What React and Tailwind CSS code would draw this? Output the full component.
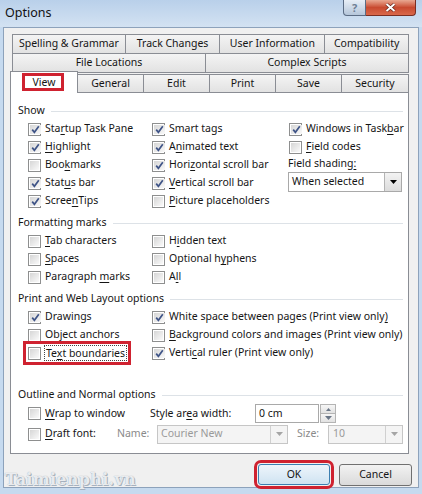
import React from 'react';

function Check({ checked }) {
  return (
    <span className="w-[13px] h-[13px] shrink-0 border border-[#8e8f8f] bg-white p-px flex">
      <span className="flex-1 bg-linear-to-br from-[#d6d6d6] to-[#fafafa] flex items-center justify-center">
        {checked && (
          <svg width="11" height="11" viewBox="0 0 11 11">
            <path d="M2.2 5.6 L4.4 8.3 L8.8 2.2" fill="none" stroke="#3f5487" strokeWidth="1.7" />
          </svg>
        )}
      </span>
    </span>
  );
}

function Opt({ checked, children, className = '' }) {
  return (
    <div className={`flex items-center gap-[4px] h-[18px] ${className}`}>
      <Check checked={checked} />
      <span className="whitespace-nowrap">{children}</span>
    </div>
  );
}

function Section({ title, className = '' }) {
  return (
    <div className={`flex items-center h-[18px] gap-[6px] pl-[7px] pr-[5px] ${className}`}>
      <span className="whitespace-nowrap">{title}</span>
      <div className="flex-1 h-px bg-[#dde2e7]" />
    </div>
  );
}

function Arrow({ color = '#000' }) {
  return (
    <svg width="7" height="4" viewBox="0 0 7 4">
      <path d="M0 0 H7 L3.5 4 Z" fill={color} />
    </svg>
  );
}

function Tab({ children, className = '' }) {
  return (
    <div
      className={`flex items-center justify-center border border-[#8a8d94] bg-linear-to-b from-[#f4f4f4] to-[#e2e2e2] -ml-px first:ml-0 whitespace-nowrap ${className}`}
    >
      {children}
    </div>
  );
}

const u = (s) => <u className="underline-offset-2">{s}</u>;

export default function App() {
  return (
    <div className="relative w-[422px] h-[494px] overflow-hidden bg-[#c6daef] text-[10.5px] text-[#151515] font-['Noto_Sans',sans-serif]">
      {/* title bar */}
      <div className="h-[27px] flex items-start justify-between bg-linear-to-b from-[#b9d0ea] to-[#d3e2f2] pl-[5px] pr-[6px]">
        <span className="text-[12.5px] pt-[4px] text-[#111]">Options</span>
        <div className="flex">
          <div className="w-[23px] h-[16px] flex items-center justify-center rounded-bl-[4px] border border-t-0 border-[#5b6c84] bg-linear-to-b from-[#e7eef6] to-[#b5c6da] text-[#6f7f95] text-[11px] leading-none font-bold">
            ?
          </div>
          <div className="w-[50px] h-[16px] flex items-center justify-center rounded-br-[4px] border border-t-0 border-l-0 border-[#7a2e22] bg-linear-to-b from-[#e8a892] via-[#c84a30] to-[#d9684a]">
            <svg width="11" height="9" viewBox="0 0 11 9">
              <path d="M1.5 1 L9.5 8 M9.5 1 L1.5 8" stroke="#5a1d14" strokeWidth="3.2" />
              <path d="M1.5 1 L9.5 8 M9.5 1 L1.5 8" stroke="#fff" strokeWidth="2" />
            </svg>
          </div>
        </div>
      </div>

      {/* dialog body */}
      <div className="ml-[3px] w-[416px] h-[461px] border border-[#8da2bb] bg-[#f0f0f0] flex flex-col pt-[6px]">
        {/* tabs */}
        <div className="flex ml-[8px] w-[397px] h-[20px]">
          <Tab className="w-[114px]">Spelling &amp; Grammar</Tab>
          <Tab className="w-[96px]">Track Changes</Tab>
          <Tab className="w-[106px]">User Information</Tab>
          <Tab className="w-[85px]">Compatibility</Tab>
        </div>
        <div className="flex ml-[8px] w-[397px] h-[20px] -mt-px">
          <Tab className="w-[194px]">File Locations</Tab>
          <Tab className="w-[204px]">Complex Scripts</Tab>
        </div>
        <div className="flex items-end ml-[6px] w-[399px] h-[19px]">
          <div className="relative z-10 w-[68px] h-[22px] -mb-px border border-b-0 border-[#8a8d94] bg-white flex items-center justify-center">
            View
            <span className="absolute left-[11px] top-[1px] w-[42px] h-[18px] border-[3px] border-[#cf2230]" />
          </div>
          {['General', 'Edit', 'Print', 'Save', 'Security'].map((t, i) => (
            <div
              key={t}
              className={`h-[18px] border border-b-0 border-l-0 border-[#8a8d94] bg-linear-to-b from-[#f4f4f4] to-[#e2e2e2] flex items-center justify-center ${i === 4 ? 'w-[67px]' : 'w-[66px]'}`}
            >
              {t}
            </div>
          ))}
        </div>

        {/* panel */}
        <div className="ml-[6px] w-[399px] h-[362px] border border-[#8a8d94] bg-white pt-[9px]">
          <Section title="Show" />
          <div className="grid grid-cols-[124px_137px_1fr] pl-[17px]">
            <div>
              <Opt checked>Sta{u('r')}tup Task Pane</Opt>
              <Opt checked>{u('H')}ighlight</Opt>
              <Opt>Boo{u('k')}marks</Opt>
              <Opt checked>Stat{u('u')}s bar</Opt>
              <Opt checked>Scree{u('n')}Tips</Opt>
            </div>
            <div>
              <Opt checked>Smart tags</Opt>
              <Opt checked>A{u('n')}imated text</Opt>
              <Opt checked>Hori{u('z')}ontal scroll bar</Opt>
              <Opt checked>{u('V')}ertical scroll bar</Opt>
              <Opt>{u('P')}icture placeholders</Opt>
            </div>
            <div>
              <Opt checked>Windows in Task{u('b')}ar</Opt>
              <Opt>{u('F')}ield codes</Opt>
              <div className="h-[16px] -ml-px flex items-center">Field shading{u(':')}</div>
              <div className="flex w-[114px] h-[20px] -ml-px border border-[#a9a9a9] bg-white">
                <span className="flex-1 flex items-center pl-[3px]">When selected</span>
                <span className="w-[17px] flex items-center justify-center border-l border-[#b4b4b4] bg-linear-to-b from-[#f3f3f3] to-[#dcdcdc]">
                  <Arrow />
                </span>
              </div>
            </div>
          </div>

          <Section title="Formatting marks" className="mt-[4px]" />
          <div className="grid grid-cols-[124px_1fr] pl-[17px]">
            <div>
              <Opt>{u('T')}ab characters</Opt>
              <Opt>{u('S')}paces</Opt>
              <Opt>Paragraph {u('m')}arks</Opt>
            </div>
            <div>
              <Opt>H{u('i')}dden text</Opt>
              <Opt>Optional h{u('y')}phens</Opt>
              <Opt>A{u('l')}l</Opt>
            </div>
          </div>

          <Section title="Print and Web Layout options" className="mt-[4px]" />
          <div className="grid grid-cols-[124px_1fr] pl-[17px]">
            <div>
              <Opt checked>Drawings</Opt>
              <Opt>Object anchors</Opt>
              <div className="flex items-center gap-[3px] h-[18px]">
                <span className="relative flex items-center gap-[3px]">
                  <Check />
                  <span className="border border-dotted border-[#444] px-px leading-[14px]">Te{u('x')}t boundaries</span>
                  <span className="absolute -left-[5px] -right-[4px] -top-[4px] -bottom-[4px] border-[3px] border-[#cf2230]" />
                </span>
              </div>
            </div>
            <div>
              <Opt checked>White space between pages (Print view only{u(')')}</Opt>
              <Opt>{u('B')}ackground colors and images (Print view only)</Opt>
              <Opt checked>Verti{u('c')}al ruler (Print view only)</Opt>
            </div>
          </div>

          <Section title="Outline and Normal options" className="mt-[24px]" />
          <div className="pl-[17px]">
            <div className="flex items-center h-[19px]">
              <Opt className="w-[122px]">{u('W')}rap to window</Opt>
              <span className="w-[105px]">Style ar{u('e')}a width:</span>
              <div className="w-[64px] h-[19px] border border-[#a9a9a9] flex items-center pl-[3px]">0 cm</div>
              <div className="w-[16px] h-[19px] flex flex-col ml-px">
                <span className="flex-1 flex items-center justify-center border border-[#b4b4b4] bg-linear-to-b from-[#f6f6f6] to-[#e2e2e2]">
                  <svg width="5" height="3" viewBox="0 0 5 3"><path d="M0 3 H5 L2.5 0 Z" fill="#6a7687" /></svg>
                </span>
                <span className="flex-1 flex items-center justify-center border border-t-0 border-[#b4b4b4] bg-linear-to-b from-[#f6f6f6] to-[#e2e2e2]">
                  <Arrow color="#6a7687" />
                </span>
              </div>
            </div>
            <div className="flex items-center h-[20px] mt-px">
              <Opt className="w-[89px]">{u('D')}raft font:</Opt>
              <span className="w-[40px] text-[#8a8a8a]">Name:</span>
              <div className="flex w-[131px] h-[19px] border border-[#c6c6c6] bg-[#f4f4f4] text-[#9a9a9a]">
                <span className="flex-1 flex items-center pl-[3px]">Courier New</span>
                <span className="w-[17px] flex items-center justify-center border-l border-[#d0d0d0]">
                  <Arrow color="#a5a5a5" />
                </span>
              </div>
              <span className="ml-[9px] w-[31px] text-[#8a8a8a]">Size:</span>
              <div className="flex w-[75px] h-[19px] border border-[#c6c6c6] bg-[#f4f4f4] text-[#9a9a9a]">
                <span className="flex-1 flex items-center pl-[4px]">10</span>
                <span className="w-[17px] flex items-center justify-center border-l border-[#d0d0d0]">
                  <Arrow color="#a5a5a5" />
                </span>
              </div>
            </div>
          </div>
        </div>

        {/* buttons */}
        <div className="flex justify-end gap-[9px] pr-[6px] mt-[10px]">
          <button className="w-[72px] h-[21px] rounded-[3px] border border-[#3c7fb1] bg-linear-to-b from-[#eef5fb] to-[#cfe3f2] outline-[3px] outline-solid outline-[#cf2230] outline-offset-[1px]">
            OK
          </button>
          <button className="w-[73px] h-[22px] rounded-[3px] border border-[#707070] bg-linear-to-b from-[#f2f2f2] to-[#dadada]">
            Cancel
          </button>
        </div>
      </div>

      {/* watermark */}
      <div className="absolute left-[5px] top-[472px] text-[16px] leading-none font-bold tracking-[0.3px] text-white/80 font-['DejaVu_Serif',serif] [text-shadow:0_0_1px_#8a96a4,1px_1px_0_#a8b4c2]">
        Taimienphi.vn
      </div>
    </div>
  );
}
